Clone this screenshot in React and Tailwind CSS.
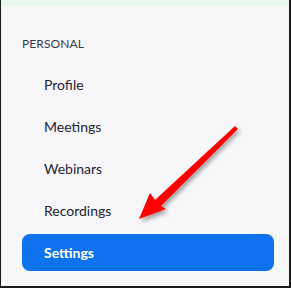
import React from 'react';

const items = ['Profile', 'Meetings', 'Webinars', 'Recordings'];

const Arrow = () => (
  <svg
    className="absolute left-0 top-0 pointer-events-none"
    width="291"
    height="288"
    viewBox="0 0 291 288"
  >
    <defs>
      <filter id="shadow" x="-20%" y="-20%" width="140%" height="140%">
        <feGaussianBlur in="SourceAlpha" stdDeviation="2" />
        <feOffset dx="2" dy="3" result="blur" />
        <feComponentTransfer>
          <feFuncA type="linear" slope="0.35" />
        </feComponentTransfer>
        <feMerge>
          <feMergeNode />
          <feMergeNode in="SourceGraphic" />
        </feMerge>
      </filter>
    </defs>
    <polygon
      points="138,219 149,193 154,200 234,126 237,129 160,206 165,209"
      fill="#ff0000"
      filter="url(#shadow)"
    />
  </svg>
);

export default function App() {
  return (
    <div
      className="relative w-[291px] h-[288px] bg-[#f7f7fa] border-l border-r-2 border-b-2 border-[#1a1a1a] overflow-hidden"
      style={{ fontFamily: 'Lato, "Noto Sans", sans-serif' }}
    >
      <div className="h-[6px] bg-[#e8f8ee]" />
      <div className="pl-[21px] pr-[15px] pt-[31px]">
        <div className="text-[12px] leading-[14px] text-[#39394d] tracking-[0.1px]">PERSONAL</div>
        <div className="mt-[12px] flex flex-col">
          {items.map((item) => (
            <div
              key={item}
              className="h-[42px] flex items-center pl-[22px] text-[14px] text-[#232333]"
            >
              {item}
            </div>
          ))}
          <div className="mt-[3px] h-[37px] flex items-center pl-[22px] rounded-[8px] bg-[#0e72ed] text-white text-[14px] font-bold">
            Settings
          </div>
        </div>
      </div>
      <Arrow />
    </div>
  );
}
